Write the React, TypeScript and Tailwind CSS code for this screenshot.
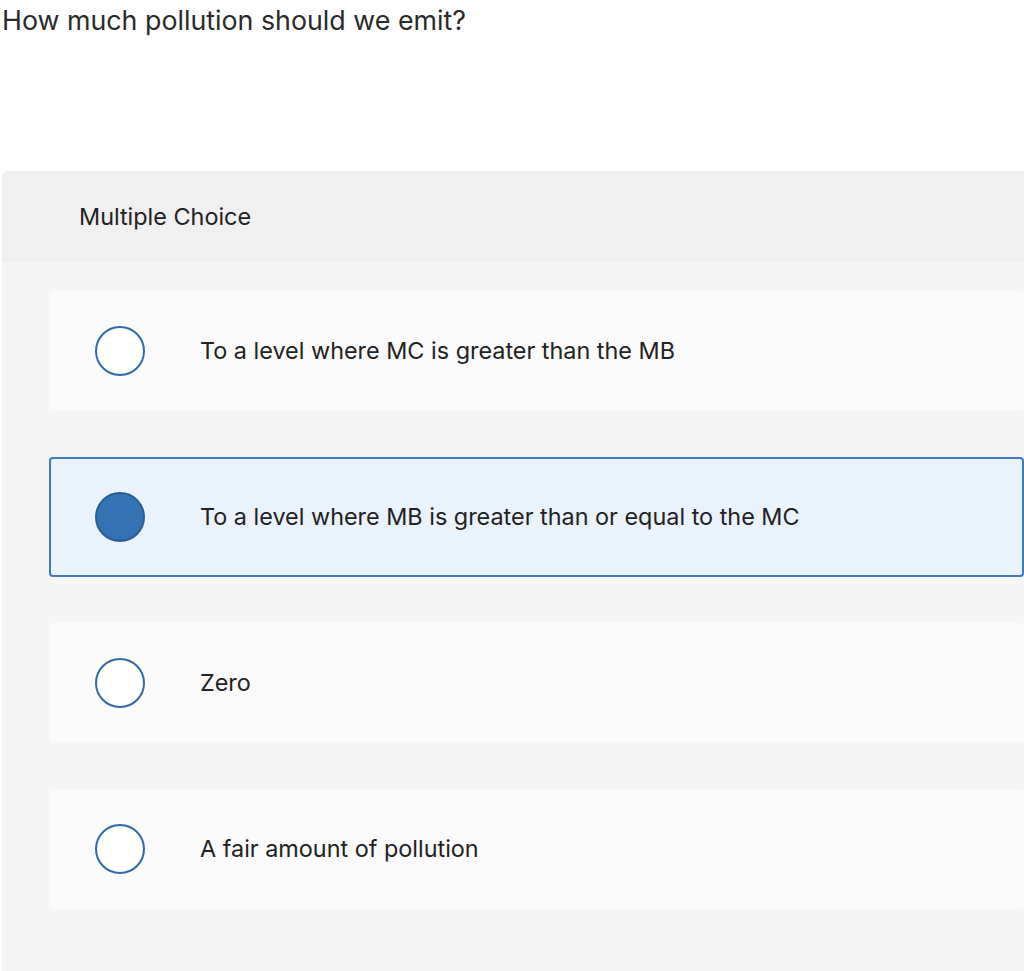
import React from "react";

const options = [
  "To a level where MC is greater than the MB",
  "To a level where MB is greater than or equal to the MC",
  "Zero",
  "A fair amount of pollution",
];

export default function App() {
  const selected = 1;
  return (
    <div
      className="w-[1024px] h-[971px] overflow-hidden bg-white text-[#222]"
      style={{ fontFamily: "Inter, 'Noto Sans', sans-serif" }}
    >
      <h1 className="pl-[2px] pt-[2px] text-[26.8px] leading-[36px] font-normal text-[#2a2a2a]">
        How much pollution should we emit?
      </h1>
      <div className="mt-[133px] ml-[2px] w-[1100px] rounded-tl-[6px] bg-[#f5f5f5] h-[800px]">
        <div className="h-[91px] bg-[#f0f0f0] rounded-tl-[6px] pl-[77px] flex items-center">
          <span className="text-[23.4px] text-[#222]">Multiple Choice</span>
        </div>
        <div className="pl-[47px] pt-[29px] flex flex-col gap-[46px]">
          {options.map((opt, i) => {
            const isSel = i === selected;
            return (
              <div
                key={i}
                className={
                  isSel
                    ? "w-[975px] h-[120px] rounded-[4px] border-2 border-[#3d7cc4] bg-[#eaf2fc] flex items-center"
                    : "w-[975px] h-[120px] rounded-[4px] border-2 border-transparent bg-[#fafafa] flex items-center"
                }
              >
                <div className="ml-[44px] mr-[55px] shrink-0">
                  {isSel ? (
                    <div className="w-[50px] h-[50px] rounded-full bg-[#3572b4] border-2 border-[#2a5e98]" />
                  ) : (
                    <div className="w-[50px] h-[50px] rounded-full bg-white border-2 border-[#2f6aa8]" />
                  )}
                </div>
                <span className="text-[23.4px] text-[#222]">{opt}</span>
              </div>
            );
          })}
        </div>
      </div>
    </div>
  );
}
